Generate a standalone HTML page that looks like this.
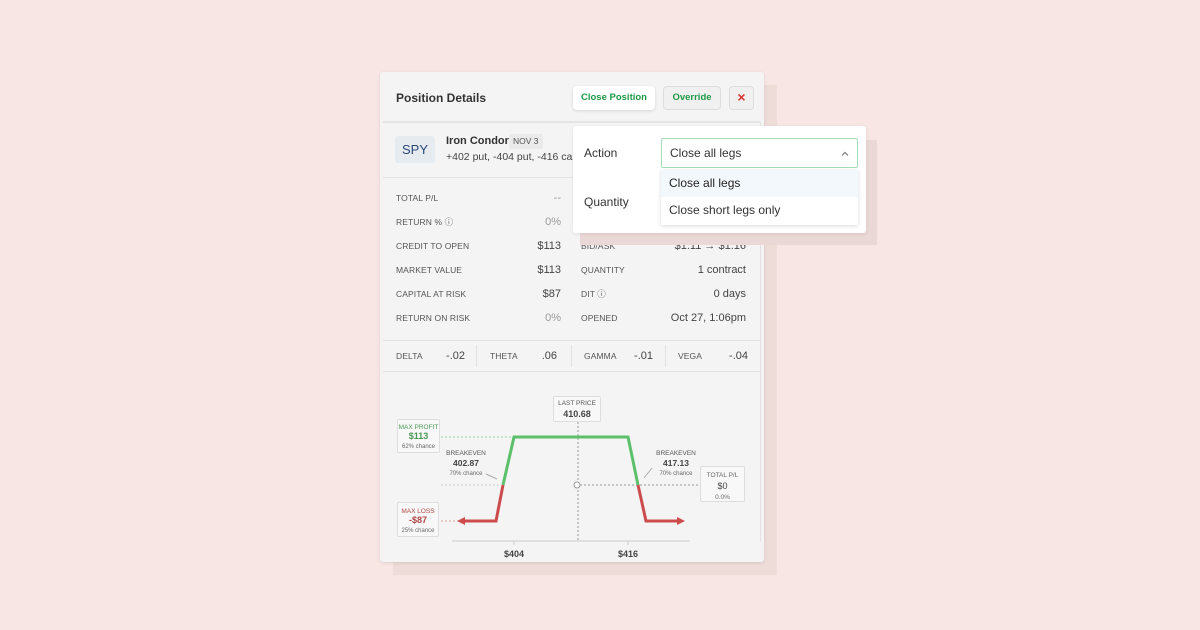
<!DOCTYPE html>
<html><head><meta charset="utf-8"><style>
*{margin:0;padding:0;box-sizing:border-box}
body{width:1200px;height:630px;background:#f7e6e3;position:relative;overflow:hidden;font-family:"Liberation Sans",sans-serif;color:#333}
.a{position:absolute}
.lbl{font-size:8.5px;color:#555;letter-spacing:.1px;line-height:14px}
.val{font-size:11px;color:#444;text-align:right;line-height:14px}
.g{color:#999}
</style></head><body>
<div class="a" style="left:393px;top:85px;width:384px;height:490px;background:#eedcd9"></div>
<div class="a" style="left:380px;top:72px;width:384px;height:490px;background:#f4f4f4;border-radius:3px;box-shadow:0 1px 3px rgba(0,0,0,.1)"></div>
<div class="a" style="left:760px;top:122px;width:1px;height:420px;background:#e2e2e2"></div>
<div class="a" style="left:396px;top:91px;font-size:12px;font-weight:bold;color:#333">Position Details</div>
<div class="a" style="left:573px;top:86px;width:82px;height:24px;background:#fff;border-radius:4px;box-shadow:0 1px 3px rgba(0,0,0,.12);font-size:9.5px;font-weight:bold;color:#1f9a46;text-align:center;line-height:24px">Close Position</div>
<div class="a" style="left:663px;top:86px;width:58px;height:24px;background:#f0f0f0;border:1px solid #ddd;border-radius:4px;font-size:9.5px;font-weight:bold;color:#1f9a46;text-align:center;line-height:22px">Override</div>
<div class="a" style="left:729px;top:86px;width:25px;height:24px;background:#f0f0f0;border:1px solid #ddd;border-radius:4px;font-size:14px;font-weight:bold;color:#d33;text-align:center;line-height:21px">×</div>
<div class="a" style="left:383px;top:121px;width:377px;height:2px;background:#e4e4e4"></div>
<div class="a" style="left:395px;top:136px;width:40px;height:27px;background:#e6ebf0;border-radius:3px;font-size:13px;color:#2a4a7a;text-align:center;line-height:27px">SPY</div>
<div class="a" style="left:446px;top:135px;font-size:11px;font-weight:bold;color:#333">Iron Condor</div>
<div class="a" style="left:509px;top:134px;padding:0 4px;height:15px;background:#eaeaea;border-radius:2px;font-size:8.5px;color:#555;line-height:15px">NOV 3</div>
<div class="a" style="left:446px;top:151px;font-size:10.5px;color:#444">+402 put, -404 put, -416 cal</div>
<div class="a" style="left:383px;top:177px;width:377px;height:1px;background:#e2e2e2"></div>

<div class="a lbl" style="left:396px;top:191px">TOTAL P/L</div><div class="a val g" style="left:500px;top:191px;width:61px">--</div>
<div class="a lbl" style="left:396px;top:215px">RETURN % ⓘ</div><div class="a val g" style="left:500px;top:215px;width:61px">0%</div>
<div class="a lbl" style="left:396px;top:239px">CREDIT TO OPEN</div><div class="a val" style="left:500px;top:239px;width:61px">$113</div>
<div class="a lbl" style="left:396px;top:263px">MARKET VALUE</div><div class="a val" style="left:500px;top:263px;width:61px">$113</div>
<div class="a lbl" style="left:396px;top:287px">CAPITAL AT RISK</div><div class="a val" style="left:500px;top:287px;width:61px">$87</div>
<div class="a lbl" style="left:396px;top:311px">RETURN ON RISK</div><div class="a val g" style="left:500px;top:311px;width:61px">0%</div>
<div class="a lbl" style="left:581px;top:239px">BID/ASK</div><div class="a val" style="left:640px;top:239px;width:106px">$1.11 → $1.16</div>
<div class="a lbl" style="left:581px;top:263px">QUANTITY</div><div class="a val" style="left:640px;top:263px;width:106px">1 contract</div>
<div class="a lbl" style="left:581px;top:287px">DIT ⓘ</div><div class="a val" style="left:640px;top:287px;width:106px">0 days</div>
<div class="a lbl" style="left:581px;top:311px">OPENED</div><div class="a val" style="left:640px;top:311px;width:106px">Oct 27, 1:06pm</div>

<div class="a" style="left:383px;top:340px;width:377px;height:1px;background:#e2e2e2"></div>
<div class="a lbl" style="left:396px;top:349px">DELTA</div><div class="a val" style="left:430px;top:349px;width:35px">-.02</div>
<div class="a" style="left:476px;top:345px;width:1px;height:22px;background:#e2e2e2"></div>
<div class="a lbl" style="left:490px;top:349px">THETA</div><div class="a val" style="left:520px;top:349px;width:37px">.06</div>
<div class="a" style="left:571px;top:345px;width:1px;height:22px;background:#e2e2e2"></div>
<div class="a lbl" style="left:584px;top:349px">GAMMA</div><div class="a val" style="left:620px;top:349px;width:33px">-.01</div>
<div class="a" style="left:665px;top:345px;width:1px;height:22px;background:#e2e2e2"></div>
<div class="a lbl" style="left:678px;top:349px">VEGA</div><div class="a val" style="left:710px;top:349px;width:38px">-.04</div>
<div class="a" style="left:383px;top:371px;width:377px;height:1px;background:#e2e2e2"></div>

<svg class="a" style="left:0;top:0" width="1200" height="630" font-family="Liberation Sans, sans-serif">
<g stroke-dasharray="2,2" stroke-width="1">
<line x1="441" y1="437" x2="512" y2="437" stroke="#9cd1a6"/>
<line x1="441" y1="485" x2="500" y2="485" stroke="#ccc"/>
<line x1="441" y1="521" x2="458" y2="521" stroke="#e0a0a0"/>
<line x1="578" y1="422" x2="578" y2="541" stroke="#999"/>
<line x1="580" y1="485" x2="700" y2="485" stroke="#999"/>
</g>
<line x1="452" y1="541" x2="690" y2="541" stroke="#ccc"/>
<line x1="514" y1="541" x2="514" y2="545" stroke="#ccc"/><line x1="628" y1="541" x2="628" y2="545" stroke="#ccc"/>
<polyline points="503,485 514,437 628,437 638,485" fill="none" stroke="#5cc06b" stroke-width="3"/>
<polyline points="503,485 496,521 462,521" fill="none" stroke="#cc4c4c" stroke-width="3"/>
<polygon points="457,521 465,517 465,525" fill="#cc4c4c"/>
<polyline points="638,485 646,521 680,521" fill="none" stroke="#cc4c4c" stroke-width="3"/>
<polygon points="685,521 677,517 677,525" fill="#cc4c4c"/>
<circle cx="577" cy="485" r="3" fill="#fff" stroke="#999"/>
<line x1="486" y1="474" x2="497" y2="479" stroke="#aaa"/><line x1="652" y1="468" x2="644" y2="478" stroke="#aaa"/>
<text x="514" y="557" font-size="9" font-weight="bold" fill="#444" text-anchor="middle">$404</text>
<text x="628" y="557" font-size="9" font-weight="bold" fill="#444" text-anchor="middle">$416</text>
<text x="466" y="455" font-size="6.5" fill="#555" text-anchor="middle">BREAKEVEN</text>
<text x="466" y="466" font-size="8.5" font-weight="bold" fill="#444" text-anchor="middle">402.87</text>
<text x="466" y="475" font-size="6" fill="#666" text-anchor="middle">70% chance</text>
<text x="676" y="455" font-size="6.5" fill="#555" text-anchor="middle">BREAKEVEN</text>
<text x="676" y="466" font-size="8.5" font-weight="bold" fill="#444" text-anchor="middle">417.13</text>
<text x="676" y="475" font-size="6" fill="#666" text-anchor="middle">70% chance</text>
</svg>
<div class="a" style="left:553px;top:396px;width:48px;height:26px;background:#f8f8f8;border:1px solid #ddd;border-radius:2px;text-align:center;font-size:6.5px;color:#555;padding-top:3px;line-height:8px">LAST PRICE<br><b style="font-size:9px;color:#444;line-height:12px">410.68</b></div>
<div class="a" style="left:397px;top:419px;width:43px;height:34px;background:#f8f8f8;border:1px solid #ddd;border-radius:2px;text-align:center;font-size:6.5px;color:#4a9a55;padding-top:3px;line-height:9px">MAX PROFIT<br><b style="font-size:9px">$113</b><br><span style="font-size:6px;color:#666">62% chance</span></div>
<div class="a" style="left:397px;top:502px;width:42px;height:35px;background:#f8f8f8;border:1px solid #ddd;border-radius:2px;text-align:center;font-size:6.5px;color:#b04545;padding-top:4px;line-height:9px">MAX LOSS<br><b style="font-size:9px">-$87</b><br><span style="font-size:6px;color:#666">25% chance</span></div>
<div class="a" style="left:700px;top:466px;width:45px;height:36px;background:#f8f8f8;border:1px solid #ddd;border-radius:2px;text-align:center;font-size:6.5px;color:#666;padding-top:4px;line-height:10px">TOTAL P/L<br><span style="font-size:9px;color:#444">$0</span><br><span style="font-size:6.5px">0.0%</span></div>

<div class="a" style="left:580px;top:140px;width:297px;height:105px;background:#ead8d6"></div>
<div class="a" style="left:573px;top:126px;width:293px;height:107px;background:#fff;border-radius:3px;box-shadow:0 1px 4px rgba(0,0,0,.08)"></div>
<div class="a" style="left:584px;top:146px;font-size:12px;color:#333">Action</div>
<div class="a" style="left:584px;top:195px;font-size:12px;color:#333">Quantity</div>
<div class="a" style="left:661px;top:138px;width:197px;height:30px;border:1px solid #a8dcb8;border-radius:2px;font-size:12px;color:#333;padding-left:8px;line-height:28px">Close all legs<svg style="position:absolute;right:8px;top:12px" width="8" height="5"><polyline points="1,4.5 4,1.5 7,4.5" fill="none" stroke="#777" stroke-width="1.2"/></svg></div>
<div class="a" style="left:661px;top:170px;width:197px;height:55px;background:#fff;border-radius:2px;box-shadow:0 1px 4px rgba(0,0,0,.15)">
<div style="height:27px;background:#f3f8fc;font-size:12px;padding-left:8px;line-height:27px;color:#222">Close all legs</div>
<div style="height:27px;font-size:12px;padding-left:8px;line-height:27px;color:#333">Close short legs only</div></div>
</body></html>
